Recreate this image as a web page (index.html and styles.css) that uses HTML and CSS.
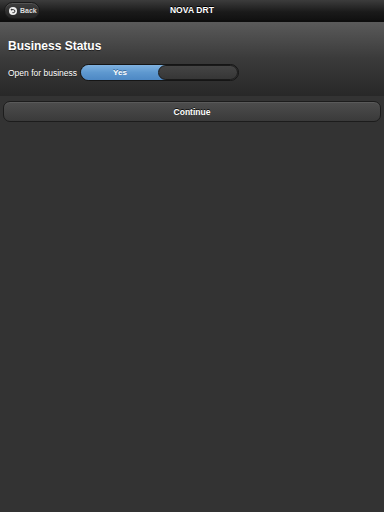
FILE: index.html
```html
<!DOCTYPE html>
<html>
<head>
<meta charset="utf-8">
<link rel="stylesheet" href="styles.css">
</head>
<body>
<div class="header">
  <button class="back"><svg class="back-icon" viewBox="0 0 10 10" width="10" height="10"><circle cx="5" cy="5" r="5" fill="#eee"/><path d="M3.2 3.3h2.3a1.9 1.9 0 0 1 0 3.8H4.3" fill="none" stroke="#222" stroke-width="1.2"/><path d="M1.9 3.3l1.7-1.4v2.8z" fill="#222"/></svg>Back</button>
  <div class="title">NOVA DRT</div>
</div>
<div class="panel">
  <h1 class="heading">Business Status</h1>
  <div class="row">
    <span class="label">Open for business</span>
    <div class="switch">
      <div class="on">Yes</div>
      <div class="knob"></div>
    </div>
  </div>
</div>
<div class="content">
  <button class="continue">Continue</button>
</div>
</body>
</html>
```
FILE: styles.css
```css
html, body {
  margin: 0;
  padding: 0;
  height: 100%;
}
body {
  background: #333333;
  font-family: "Liberation Sans", Arial, sans-serif;
  color: #fff;
}
.header {
  position: relative;
  height: 20px;
  background: linear-gradient(#3c3c3c, #1a1a1a 60%, #111);
  border-bottom: 2px solid #0d0d0d;
  display: flex;
  align-items: center;
  justify-content: center;
}
.back {
  position: absolute;
  left: 4px;
  top: 2px;
  height: 17px;
  width: 36px;
  box-sizing: border-box;
  border-radius: 9px;
  border: 1px solid #1a1a1a;
  background: linear-gradient(#3e3e3e, #252525);
  box-shadow: inset 0 1px 0 rgba(255,255,255,0.12);
  color: #ddd;
  font: bold 7px "Liberation Sans", Arial, sans-serif;
  display: flex;
  align-items: center;
  gap: 3px;
  padding: 0 0 0 4px;
}
.back-icon {
  width: 8px;
  height: 8px;
}
.title {
  font-weight: bold;
  font-size: 8.5px;
  letter-spacing: 0.1px;
  text-shadow: 0 -1px 0 #000;
}
.panel {
  height: 74px;
  background: linear-gradient(#5a5a5a, #3a3a3a 50%, #282828);
  padding: 17px 8px 0;
  box-sizing: border-box;
}
.heading {
  margin: 0;
  font-size: 12px;
  line-height: 14px;
  font-weight: bold;
  text-shadow: 0 1px 0 #222;
}
.row {
  display: flex;
  align-items: center;
  margin-top: 11px;
}
.label {
  font-size: 8.5px;
  width: 72px;
  text-shadow: 0 1px 0 #222;
}
.switch {
  position: relative;
  width: 159px;
  height: 17px;
  box-sizing: border-box;
  border-radius: 9px;
  border: 1px solid #151515;
  background: #3a3a3a;
  overflow: hidden;
  display: flex;
}
.on {
  width: 84px;
  background: linear-gradient(#7fb2e0, #5e98cf 50%, #4d88c4);
  font-size: 8px;
  font-weight: bold;
  display: flex;
  align-items: center;
  justify-content: center;
  padding-right: 6px;
  box-sizing: border-box;
  text-shadow: 0 -1px 0 #3a6a9a;
}
.knob {
  position: absolute;
  right: 0;
  top: 0;
  bottom: 0;
  width: 80px;
  box-sizing: border-box;
  border-radius: 9px;
  border: 1px solid #1a1a1a;
  background: linear-gradient(#454545, #363636);
}
.content {
  padding: 5px 3px 0;
}
.continue {
  display: block;
  width: 100%;
  height: 21px;
  box-sizing: border-box;
  border-radius: 7px;
  border: 1px solid #1c1c1c;
  background: linear-gradient(#4d4d4d, #3a3a3a);
  box-shadow: inset 0 1px 0 rgba(255,255,255,0.08);
  color: #fff;
  font: bold 8.5px "Liberation Sans", Arial, sans-serif;
  text-shadow: 0 -1px 0 #111;
}
```
